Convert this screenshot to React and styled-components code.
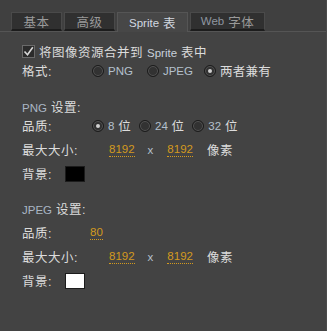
import React from "react";
import styled, { createGlobalStyle } from "styled-components";

const Global = createGlobalStyle`
  html, body { margin: 0; padding: 0; background: #434343; }
  body {
    font-family: "Liberation Sans", "Noto Sans CJK SC", sans-serif;
    font-size: 12px;
    color: #d6d6d6;
  }
`;

const Panel = styled.div`
  width: 326px;
  height: 331px;
  background: #434343;
  border-right: 1px solid #4b4b4b;
  overflow: hidden;
`;

const TabBar = styled.div`
  display: flex;
  align-items: flex-end;
  padding: 12px 0 0 11px;
  background: #404040;
  border-bottom: 1px solid #555;
  height: 19px;
`;

const Tab = styled.div`
  box-sizing: border-box;
  width: ${(p) => p.w}px;
  height: ${(p) => (p.active ? 20 : 19)}px;
  margin-right: 2px;
  margin-bottom: ${(p) => (p.active ? -1 : 0)}px;
  display: flex;
  align-items: center;
  justify-content: center;
  background: ${(p) => (p.active ? "#474747" : "#303030")};
  border: 1px solid ${(p) => (p.active ? "#555" : "#4a4a4a")};
  border-bottom: ${(p) => (p.active ? "none" : "2px solid #1c1c1c")};
  color: ${(p) => (p.active ? "#d2d8e0" : "#9a9a9a")};
  font-size: 12.5px;
  letter-spacing: 0.5px;
`;

const Latin = styled.span`
  font-size: 11.5px;
  letter-spacing: 0;
  color: ${(p) => p.color || "inherit"};
`;

const Content = styled.div`
  padding: 10px 0 0 22px;
  display: flex;
  flex-direction: column;
`;

const Row = styled.div`
  display: flex;
  align-items: center;
  height: 19px;
  margin-top: ${(p) => p.mt || 0}px;
  white-space: nowrap;
  font-size: 12.5px;
`;

const Label = styled.span`
  width: ${(p) => p.w}px;
  flex: none;
  letter-spacing: 0.5px;
  color: #dcdcdc;
`;

const Heading = styled.span`
  color: #dcdcdc;
  letter-spacing: 0.5px;
`;

const Check = styled.span`
  box-sizing: border-box;
  width: 13px;
  height: 13px;
  margin-right: 4px;
  background: #2b2b2b;
  border: 1px solid #6a6a6a;
  display: flex;
  align-items: center;
  justify-content: center;
`;

const Option = styled.span`
  display: flex;
  align-items: center;
  margin-right: ${(p) => p.gap || 0}px;
  color: #dcdcdc;
  letter-spacing: 0.3px;
`;

const Radio = styled.span`
  box-sizing: border-box;
  width: 12px;
  height: 12px;
  border-radius: 50%;
  margin-right: 4px;
  background: #323232;
  border: 1px solid #1c1c1c;
  box-shadow: inset 0 0 0 1px #555;
  display: flex;
  align-items: center;
  justify-content: center;
  &::after {
    content: "";
    width: 4px;
    height: 4px;
    border-radius: 50%;
    background: ${(p) => (p.on ? "#d0d0d0" : "transparent")};
  }
`;

const Value = styled.span`
  font-size: 11.5px;
  color: #d39a1e;
  border-bottom: 1px dotted #d39a1e;
  line-height: 14px;
  margin-right: ${(p) => p.gap || 0}px;
`;

const Times = styled.span`
  font-size: 11.5px;
  color: #b4c0cc;
  margin-right: 14px;
`;

const Swatch = styled.span`
  box-sizing: border-box;
  width: 20px;
  height: 16px;
  background: ${(p) => p.color};
  border: 1px solid #1c1c1c;
`;

const Mark = () => (
  <svg width="11" height="11" viewBox="0 0 11 11">
    <path d="M1.5 5.5 L4.5 8.8 L9.8 1.2" fill="none" stroke="#d8d8d8" strokeWidth="1.6" />
  </svg>
);

function SizeRow({ mt }) {
  return (
    <Row mt={mt}>
      <Label w={87}>最大大小:</Label>
      <Value gap={13}>8192</Value>
      <Times>x</Times>
      <Value gap={14}>8192</Value>
      <Label w={40}>像素</Label>
    </Row>
  );
}

export default function App() {
  return (
    <Panel>
      <Global />
      <TabBar>
        <Tab w={51}>基本</Tab>
        <Tab w={51}>高级</Tab>
        <Tab w={71} active>
          <Latin>Sprite</Latin>&nbsp;表
        </Tab>
        <Tab w={75}>
          <Latin color="#8f96a0">Web</Latin>&nbsp;字体
        </Tab>
      </TabBar>
      <Content>
        <Row>
          <Check>
            <Mark />
          </Check>
          <Heading>
            将图像资源合并到 <Latin color="#c8d0da">Sprite</Latin> 表中
          </Heading>
        </Row>
        <Row>
          <Label w={70}>格式:</Label>
          <Option gap={14}>
            <Radio />
            <Latin color="#b4c0cc">PNG</Latin>
          </Option>
          <Option gap={11}>
            <Radio />
            <Latin color="#b4c0cc">JPEG</Latin>
          </Option>
          <Option>
            <Radio on />
            两者兼有
          </Option>
        </Row>

        <Row mt={17}>
          <Heading>
            <Latin color="#aab6c4">PNG</Latin> 设置:
          </Heading>
        </Row>
        <Row>
          <Label w={70}>品质:</Label>
          <Option gap={8}>
            <Radio on />
            <Latin color="#b4c0cc">8</Latin>&nbsp;位
          </Option>
          <Option gap={8}>
            <Radio />
            <Latin color="#b4c0cc">24</Latin>&nbsp;位
          </Option>
          <Option>
            <Radio />
            <Latin color="#b4c0cc">32</Latin>&nbsp;位
          </Option>
        </Row>
        <SizeRow mt={5} />
        <Row mt={5}>
          <Label w={43}>背景:</Label>
          <Swatch color="#000" />
        </Row>

        <Row mt={16}>
          <Heading>
            <Latin color="#aab6c4">JPEG</Latin> 设置:
          </Heading>
        </Row>
        <Row mt={5}>
          <Label w={68}>品质:</Label>
          <Value>80</Value>
        </Row>
        <SizeRow mt={5} />
        <Row mt={5}>
          <Label w={43}>背景:</Label>
          <Swatch color="#fff" />
        </Row>
      </Content>
    </Panel>
  );
}
